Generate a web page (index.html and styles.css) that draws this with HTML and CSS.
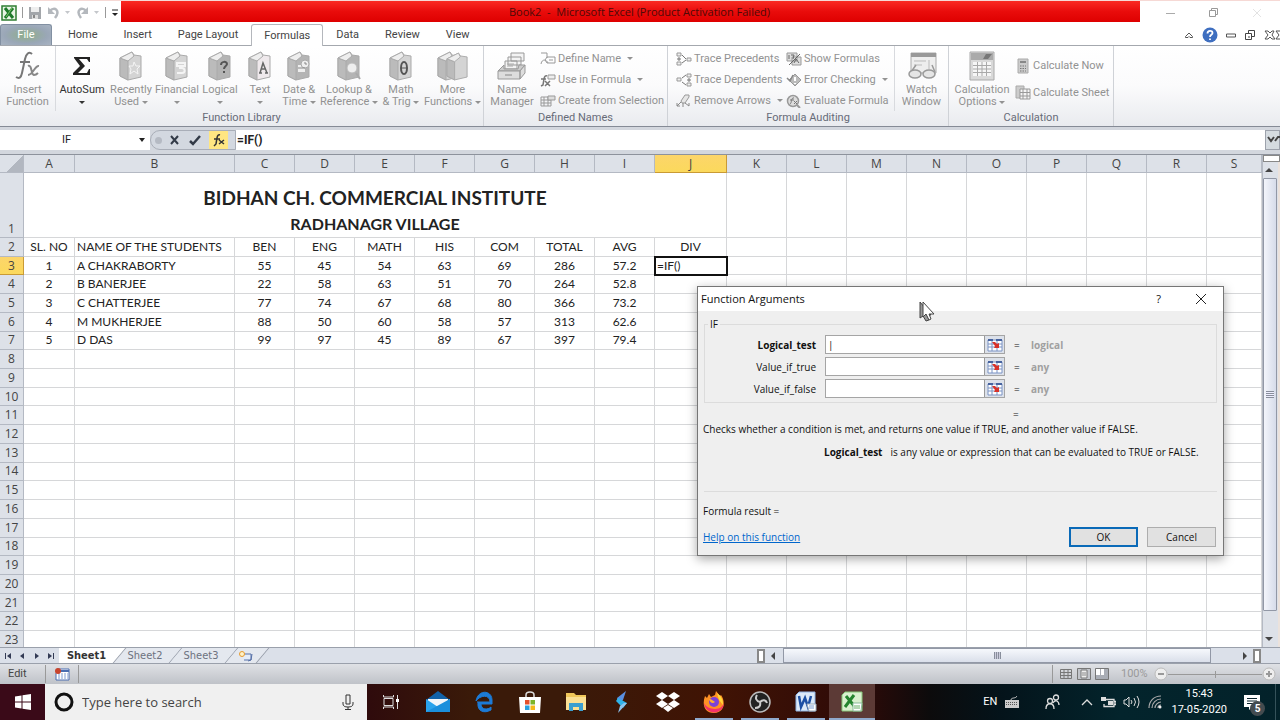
FILE: index.html
```
<!DOCTYPE html>
<html lang="en">
<head>
<meta charset="utf-8">
<title>Book2 - Microsoft Excel</title>
<link rel="stylesheet" href="styles.css">
</head>
<body>

<svg class="defs" aria-hidden="true">
<symbol id="book" viewBox="0 0 24 30">
<path d="M1 7 13 1 15 4 22 5V26L9 29 1 25Z" fill="currentColor" stroke="#aaa" />
<path d="M1 7 9 10V29L1 25Z" fill="#bbb" stroke="#aaa" />
<path d="M1 7 13 1 15 5 9 10Z" fill="#eee" stroke="#aaa" />
</symbol>
<symbol id="pick" viewBox="0 0 16 14">
<path d="M1 2h14v11H1z" fill="#fff" stroke="#7b93c4" />
<path d="M1 1h5v2H1zM9 1h6v2H9z" fill="#47639f" />
<path d="M1 6h14M1 9h14M5 3v10M10 3v10" stroke="#7b93c4" />
<path d="M5 4 8 4 10 6 12 5 12 10 7 10 8 8Z" fill="#d8322a" />
</symbol>
<symbol id="zoomout" viewBox="0 0 14 14"><circle cx="7" cy="7" r="6" fill="#eee" stroke="#bbb" /><path d="M4 7h6" stroke="#999" stroke-width="2" /></symbol>
<symbol id="zoomin" viewBox="0 0 14 14"><circle cx="7" cy="7" r="6" fill="#eee" stroke="#bbb" /><path d="M4 7h6M7 4v6" stroke="#999" stroke-width="2" /></symbol>
</svg>

<!-- title bar -->
<header class="titlebar">
<div class="quick">
<svg width="16" height="16" viewBox="0 0 16 16"><path d="M1 1h14v14H1z" fill="#e9f5e5" stroke="#2f7d32" stroke-width="1.5" /><path d="M4 3 12 13M12 3 4 13" stroke="#1f7a2a" stroke-width="3" /><path d="M11 3 5 12" stroke="#7cc56a" /></svg>
<i class="qsep"></i>
<button aria-label="Save"><svg width="14" height="14" viewBox="0 0 14 14"><path d="M1 1h12v12H1z" fill="#a3a6aa" /><path d="M3 1h8v5H3z" fill="#eee" /><path d="M4 9h6v4H4z" fill="#ddd" /><path d="M5 9h2v3H5z" fill="#888" /></svg></button>
<button aria-label="Undo"><svg width="24" height="14" viewBox="0 0 24 14"><path d="M3 5C7 0 14 4 8 12" fill="none" stroke="#b4b8bd" stroke-width="2.500" /><path d="M1 1v7h7z" fill="#b4b8bd" /><path d="M18 5h5l-2.500 3z" fill="#c4c7cb" /></svg></button>
<button aria-label="Redo"><svg width="24" height="14" viewBox="0 0 24 14"><path d="M10 5C6 0-1 4 5 12" fill="none" stroke="#b4b8bd" stroke-width="2.500" /><path d="M12 1v7H5z" fill="#b4b8bd" /><path d="M18 5h5l-2.500 3z" fill="#c4c7cb" /></svg></button>
<i class="qsep"></i>
<button aria-label="Customize"><svg width="8" height="8" viewBox="0 0 8 8"><path d="M1 1h6" stroke="#222" /><path d="M1 4h6L4 7z" fill="#222" /></svg></button>
</div>
<h1 class="caption">Book2&nbsp; -&nbsp; Microsoft Excel (Product Activation Failed)</h1>
<div class="winbtns">
<button aria-label="Minimize"><svg width="12" height="12"><path d="M1 6.500h9" stroke="#aaa" /></svg></button>
<button aria-label="Restore"><svg width="12" height="12"><path d="M1.500 3.500h6v6h-6zM3.500 3V1.500h6v6H8" fill="none" stroke="#999" /></svg></button>
<button aria-label="Close"><svg width="12" height="12"><path d="M2 2l8 8M10 2l-8 8" stroke="#e3e3e3" /></svg></button>
</div>
</header>

<!-- ribbon tabs -->
<nav class="tabs">
<button class="file">File</button>
<button>Home</button>
<button>Insert</button>
<button>Page Layout</button>
<button class="active">Formulas</button>
<button>Data</button>
<button>Review</button>
<button>View</button>
<div class="tabtools">
<svg width="10" height="8"><path d="M1.500 5.500 5 2l3.500 3.500v1H6L5 5.500l-1 1H1.500z" fill="none" stroke="#555" /></svg>
<svg width="16" height="16"><circle cx="8" cy="8" r="7.500" fill="#3f6fc0" /><path d="M5.500 6.500c0-3.500 5-3.500 5-.5 0 2-2.500 1.500-2.500 4M8 11.500v1.500" fill="none" stroke="#fff" stroke-width="1.800" /></svg>
<svg width="10" height="6"><path d="M.5 2h9v3h-9z" fill="none" stroke="#555" /></svg>
<svg width="12" height="12"><path d="M4.500 4V1.500h6v6H8M1.500 4.500h6v6h-6zM4 8h2" fill="none" stroke="#444" /></svg>
<svg width="16" height="10"><path d="M1 1h3l2 2 2-2h2L8 5l3 4H8L6 7 4 9H1l3-4zM16 1h-4l3 4-3 4h4" fill="none" stroke="#555" /></svg>
</div>
</nav>

<!-- ribbon -->
<section class="ribbon">
<div class="group">
<div class="items library">
<button class="big"><svg width="26" height="30" viewBox="0 0 26 30"><path d="M17 3c-3-3-6 0-7 5L7 22c-1 5-3 6-6 4M5 11h10" fill="none" stroke="#777" stroke-width="2" /><path d="M13 15c4-2 3 9 6 9 2 0 3-1 4-2M24 15c-4-1-6 9-11 9" fill="none" stroke="#888" stroke-width="2" /></svg><span>Insert<br>Function</span></button>
<button class="big on rule"><svg width="26" height="30" viewBox="0 0 26 30"><path d="M5 6h16v5h-1l-2-3h-8l6 7-7 7h9l2-4h1v6H4v-2l7-7-6-8z" fill="#222" /></svg><span>AutoSum<br><i class="dd"></i></span></button>
<button class="big"><svg width="24" height="30"><use href="#book" /><path d="m15 11 2 4h4l-3 3 1 5-4-3-4 3 1-5-2-3h4z" fill="none" stroke="#f4f4f4" /></svg><span>Recently<br>Used <i class="dd"></i></span></button>
<button class="big"><svg width="24" height="30"><use href="#book" /><path d="M12 12h8v3h-8zM12 22h5c4 0 3-5 0-5h-3" fill="none" stroke="#f4f4f4" stroke-width="2" /></svg><span>Financial<br><i class="dd"></i></span></button>
<button class="big dark"><svg width="24" height="30"><use href="#book" /><path d="M13 14c0-4 6-4 6-1 0 2-3 2-3 5M16 20v2" fill="none" stroke="#555" stroke-width="2" /></svg><span>Logical<br><i class="dd"></i></span></button>
<button class="big light"><svg width="24" height="30"><use href="#book" /><path d="m12 22 3-10 4 10M13 18h5M11 22h3M17 22h3" fill="none" stroke="#666" stroke-width="1.500" /></svg><span>Text<br><i class="dd"></i></span></button>
<button class="big dark"><svg width="24" height="30"><use href="#book" /><path d="M11 14h7v7h-7z" fill="#eee" /><circle cx="18" cy="13" r="4" fill="#eee" stroke="#aaa" /><path d="M11 17h7M18 11v2h2" stroke="#888" fill="none" /></svg><span>Date &amp;<br>Time <i class="dd"></i></span></button>
<button class="big dark"><svg width="24" height="30"><use href="#book" /><circle cx="15" cy="17" r="5" fill="#eee" stroke="#bbb" /><path d="m19 22 4 6" stroke="#aaa" stroke-width="2" /></svg><span>Lookup &amp;<br>Reference <i class="dd"></i></span></button>
<button class="big"><svg width="24" height="30"><use href="#book" /><ellipse cx="15" cy="17" rx="3" ry="6" fill="none" stroke="#555" stroke-width="2" /><path d="M13 17h4" stroke="#555" /></svg><span>Math<br>&amp; Trig <i class="dd"></i></span></button>
<button class="big"><svg width="32" height="30"><use href="#book" width="24" height="30" /><use href="#book" x="9" y="1" width="23" height="29" /></svg><span>More<br>Functions <i class="dd"></i></span></button>
</div>
<h2>Function Library</h2>
</div>

<div class="group">
<div class="items names">
<button class="big"><svg width="30" height="30" viewBox="0 0 30 30"><path d="M14 2h13v8H14zM11 6h13v8H11zM8 10h12v8H8z" fill="#f3f3f3" stroke="#999" /><path d="M10 13h7M10 15h6" stroke="#aaa" /><path d="M1 20 7 14V18h14l1-4h6l-5 6z" fill="#ccc" stroke="#999" /><path d="M1 20h22v8H1zM23 20l5-6v8l-5 6z" fill="#ddd" stroke="#999" /><path d="M8 24h7" stroke="#888" /></svg><span>Name<br>Manager</span></button>
<div class="stack">
<button><svg width="16" height="14"><path d="M1 1h6v5M1 12c1-6 6-4 7-1M7 5h8v6H7l-2-3zM9 8h4" fill="none" stroke="#999" /></svg>Define Name <i class="dd"></i></button>
<button><svg width="16" height="14"><path d="M7 3C4 2 4 6 3 12L1 13M1 6h5M5 8l5 5M10 8l-5 5" fill="none" stroke="#777" stroke-width="1.500" /><path d="M8 2h7v4H8z" fill="#eee" stroke="#999" /></svg>Use in Formula <i class="dd"></i></button>
<button><svg width="16" height="14"><path d="M1 3h10v9H1zM1 6h10M1 9h10M4 3v9M8 3v9" fill="none" stroke="#999" /><path d="M8 2h7v4H8z" fill="#ddd" stroke="#999" /></svg>Create from Selection</button>
</div>
</div>
<h2>Defined Names</h2>
</div>

<div class="group">
<div class="items audit">
<div class="stack">
<button><svg width="16" height="14"><path d="M1 1h4v3H1zM1 10h4v3H1zM11 6h4v3h-4z" fill="#eee" stroke="#999" /><path d="M6 3l4 4M6 11l4-3M1 7h4M3 5v4" fill="none" stroke="#777" /></svg>Trace Precedents</button>
<button><svg width="16" height="14"><path d="M1 5h4v3H1zM11 1h4v3h-4zM11 10h4v3h-4z" fill="#eee" stroke="#999" /><path d="M6 5l4-3M6 9l4 3M11 7h4M13 5v4" fill="none" stroke="#777" /></svg>Trace Dependents</button>
<button><svg width="16" height="14"><path d="M5 7 9 1h4v2L9 9H6z" fill="#e6e6e6" stroke="#999" /><path d="M5 8 1 12h3M1 12V9M7 9v4M9 9l4 3M13 12v-3" fill="none" stroke="#888" /></svg>Remove Arrows <i class="dd"></i></button>
</div>
<div class="stack">
<button><svg width="16" height="14"><path d="M1 1h10v8H1zM6 5h9v8H6z" fill="#ddd" stroke="#999" /><path d="M3 3v4M5 3h3l-1 4M14 2 3 13M8 11l2-4 3 4" fill="none" stroke="#666" /></svg>Show Formulas</button>
<button><svg width="16" height="14"><path d="m9 1 6 6-6 6-6-6z" fill="#bbb" stroke="#999" /><path d="M9 4v4M9 10v1" stroke="#fff" stroke-width="2" /><path d="m1 5 3 3 3-6" fill="none" stroke="#888" stroke-width="1.500" /></svg>Error Checking <i class="dd"></i></button>
<button><svg width="16" height="14"><circle cx="7" cy="7" r="5.500" fill="#ddd" stroke="#999" stroke-width="1.500" /><path d="M8 4C5 3 6 9 4 10M4 6h4M8 7l3 3M11 7l-3 3" fill="none" stroke="#777" /><path d="m11 11 3 3" stroke="#999" stroke-width="2" /></svg>Evaluate Formula</button>
</div>
<button class="big rule"><svg width="30" height="30" viewBox="0 0 30 30"><path d="M4 2h25v20H4z" fill="#eee" stroke="#aaa" /><path d="M4 2h25v4H4z" fill="#999" /><path d="M7 10h12M7 14h8M22 9v9" stroke="#bbb" /><path d="m4 21 5-7M28 21l-3-7" stroke="#999" stroke-width="1.500" /><ellipse cx="8" cy="23" rx="6" ry="4" fill="#e5e5e5" stroke="#999" stroke-width="1.500" /><ellipse cx="22" cy="23" rx="6" ry="4" fill="#e5e5e5" stroke="#999" stroke-width="1.500" /></svg><span>Watch<br>Window</span></button>
</div>
<h2>Formula Auditing</h2>
</div>

<div class="group">
<div class="items calc">
<button class="big"><svg width="26" height="30" viewBox="0 0 26 30"><path d="M1 1h24v28H1z" fill="#d9d9d9" stroke="#aaa" /><path d="M2 2h22v7H2z" fill="#aaa" /><path d="m14 8 3-5h6l-4 5z" fill="#777" /><path d="M4 11h18v14H4z" fill="#f6f6f6" /><path d="M4 14.500h18M4 18h18M4 21.500h18M8.500 11v14M13 11v14M17.500 11v14" stroke="#aaa" /></svg><span>Calculation<br>Options <i class="dd"></i></span></button>
<div class="stack loose">
<button><svg width="16" height="16"><path d="M3 1h10v14H3z" fill="#ccc" stroke="#aaa" /><path d="M5 3h6v2H5z" fill="#888" /><path d="M5 8h6M5 10.500h6M5 13h6" stroke="#777" stroke-dasharray="1.500 1" /></svg>Calculate Now</button>
<button><svg width="16" height="16"><path d="M1 1h8v12H1z" fill="#ccc" stroke="#aaa" /><path d="M5 4h10v10H5z" fill="#f5f5f5" stroke="#999" /><path d="M5 7.500h10M5 11h10M8 4v10M12 4v10" stroke="#999" /></svg>Calculate Sheet</button>
</div>
</div>
<h2>Calculation</h2>
</div>
</section>

<!-- formula bar -->
<section class="fbar">
<input class="namebox" aria-label="Name Box" value="IF">
<button class="namedd" aria-label="Names"><svg width="8" height="6"><path d="M1 1h6L4 5z" fill="#222" /></svg></button>
<div class="fbtns">
<i class="knob"></i>
<button aria-label="Cancel"><svg width="12" height="12"><path d="m2 2 7 8M9 2l-7 8" stroke="#333b48" stroke-width="2" /></svg></button>
<button aria-label="Enter"><svg width="14" height="12"><path d="m2 7 3 3 7-8" fill="none" stroke="#333b48" stroke-width="2.500" /></svg></button>
<button class="fx" aria-label="Insert Function"><svg width="14" height="14"><path d="M8 2C5 1 5 5 4 11L2 13M2 6h6M7 7l5 4M12 7l-5 4" fill="none" stroke="#333" stroke-width="1.500" /></svg></button>
</div>
<input class="formula" aria-label="Formula Bar" value="=IF()">
<button class="expand" aria-label="Expand"><svg width="14" height="8"><path d="m2 1 3 4 3-4M9 5l3-4h2" fill="none" stroke="#444" stroke-width="2" /></svg></button>
</section>

<!-- worksheet -->
<main class="work">
<div class="sheet">
<table id="grid">
<colgroup>
<col class="rowno"><col class="a"><col class="b"><col><col><col><col><col><col><col><col class="j"><col><col><col><col><col><col><col><col><col class="rest">
</colgroup>
<thead>
<tr><th class="corner"></th><th>A</th><th>B</th><th>C</th><th>D</th><th>E</th><th>F</th><th>G</th><th>H</th><th>I</th><th class="sel">J</th><th>K</th><th>L</th><th>M</th><th>N</th><th>O</th><th>P</th><th>Q</th><th>R</th><th>S</th></tr>
</thead>
<tbody>
<tr class="heading"><th>1</th><td colspan="10"><b>BIDHAN CH. COMMERCIAL INSTITUTE</b><br><strong>RADHANAGR VILLAGE</strong></td></tr>
<tr><th>2</th><td>SL. NO</td><td>NAME OF THE STUDENTS</td><td>BEN</td><td>ENG</td><td>MATH</td><td>HIS</td><td>COM</td><td>TOTAL</td><td>AVG</td><td>DIV</td></tr>
<tr><th class="sel">3</th><td>1</td><td>A CHAKRABORTY</td><td>55</td><td>45</td><td>54</td><td>63</td><td>69</td><td>286</td><td>57.2</td><td class="cur">=IF()</td></tr>
<tr><th>4</th><td>2</td><td>B BANERJEE</td><td>22</td><td>58</td><td>63</td><td>51</td><td>70</td><td>264</td><td>52.8</td><td></td></tr>
<tr><th>5</th><td>3</td><td>C CHATTERJEE</td><td>77</td><td>74</td><td>67</td><td>68</td><td>80</td><td>366</td><td>73.2</td><td></td></tr>
<tr><th>6</th><td>4</td><td>M MUKHERJEE</td><td>88</td><td>50</td><td>60</td><td>58</td><td>57</td><td>313</td><td>62.6</td><td></td></tr>
<tr><th>7</th><td>5</td><td>D DAS</td><td>99</td><td>97</td><td>45</td><td>89</td><td>67</td><td>397</td><td>79.4</td><td></td></tr>
</tbody>
</table>
</div>
<div class="vscroll">
<i class="vsplit"></i>
<button aria-label="Up"><svg width="10" height="6"><path d="M1 5h8L5 1z" fill="#444" /></svg></button>
<div class="vthumb"><i></i></div>
<button aria-label="Down"><svg width="10" height="6"><path d="M1 1h8L5 5z" fill="#444" /></svg></button>
</div>
</main>

<!-- sheet tabs -->
<footer class="sheetbar">
<div class="nav">
<button aria-label="First"><svg width="8" height="8"><path d="M1.500 1v6" stroke="#333b55" /><path d="M7 1v6L3 4z" fill="#333b55" /></svg></button>
<button aria-label="Previous"><svg width="8" height="8"><path d="M6 1v6L2 4z" fill="#333b55" /></svg></button>
<button aria-label="Next"><svg width="8" height="8"><path d="M2 1v6l4-3z" fill="#333b55" /></svg></button>
<button aria-label="Last"><svg width="8" height="8"><path d="M1 1v6l4-3z" fill="#333b55" /><path d="M6.500 1v6" stroke="#333b55" /></svg></button>
</div>
<button class="tab current"><span>Sheet1</span></button>
<button class="tab"><span>Sheet2</span></button>
<button class="tab"><span>Sheet3</span></button>
<button class="tab new" aria-label="Insert Worksheet"><svg width="16" height="12"><path d="M4 4h9v6H6" fill="#e4ecf8" stroke="#5670a8" /><path d="M10 11l3-1 1-6" fill="none" stroke="#5670a8" /><circle cx="4" cy="4" r="2.500" fill="#fff3c9" stroke="#e69a2e" /></svg></button>
<div class="hscroll">
<i class="hsplit"></i>
<button aria-label="Left"><svg width="6" height="10"><path d="M5 1v8L1 5z" fill="#444" /></svg></button>
<div class="hthumb"><i></i></div>
<button class="right" aria-label="Right"><svg width="6" height="10"><path d="M1 1v8l4-4z" fill="#444" /></svg></button>
<i class="hsplit"></i>
</div>
</footer>

<!-- status bar -->
<section class="status">
<span class="mode">Edit</span>
<button class="macro" aria-label="Record Macro"><svg width="16" height="14"><path d="M3 2h12v11H2V6" fill="#fff" stroke="#4a6db0" /><path d="M5 3h10v2H5z" fill="#4a6db0" /><path d="M4 7h10M4 9h10M4 11h10" stroke="#7f9bd0" stroke-dasharray="2 1" /><circle cx="4" cy="4" r="3" fill="#c8442d" /></svg></button>
<div class="views">
<button aria-label="Normal"><svg width="14" height="12"><path d="M1.500 1.500h11v9h-11zM1 4.500h12M1 7.500h12M5 1v10M9 1v10" fill="none" stroke="#777" /></svg></button>
<button aria-label="Page Layout"><svg width="14" height="12"><path d="M.5.500h13v11H.5z" fill="#c2c5cb" stroke="#777" /><path d="M4 2h6v8H4z" fill="#eee" stroke="#777" /><path d="M5 5h4M5 7h4" stroke="#888" /></svg></button>
<button aria-label="Page Break"><svg width="14" height="12"><path d="M.5.500h13v11H.5z" fill="#a9adb5" stroke="#777" /><path d="M1 1h4v6H1zM6 1h3v6H6z" fill="#fff" /></svg></button>
</div>
<span class="pct">100%</span>
<button aria-label="Zoom out"><svg width="14" height="14"><use href="#zoomout" /></svg></button>
<input class="zoom" type="range" min="0" max="100" value="50" aria-label="Zoom">
<button aria-label="Zoom in"><svg width="14" height="14"><use href="#zoomin" /></svg></button>
</section>

<!-- taskbar -->
<section class="taskbar">
<button class="start" aria-label="Start"><svg width="16" height="16"><path d="M0 2.500 6.500 1.500V7.500H0zM7.500 1.300 16 0v7.500H7.500zM0 8.500h6.500v6L0 13.500zM7.500 8.500H16V16l-8.500-1.300z" fill="#fff" /></svg></button>
<label class="search">
<svg width="20" height="20"><circle cx="10" cy="10" r="8" fill="none" stroke="#111" stroke-width="3" /></svg>
<input type="text" placeholder="Type here to search">
<svg width="12" height="16"><path d="M4 1h4v9H4z" fill="none" stroke="#333" /><path d="M1 8v2q0 3 5 3t5-3V8M6 13v3M3 15.500h6" fill="none" stroke="#333" /></svg>
</label>
<button class="app view" aria-label="Task View"><svg width="18" height="16"><path d="M2 4.500h9v7H2zM1.500 1v2h10V1M1.500 15v-2h10v2M15.500 1v14" fill="none" stroke="#ddd" /><path d="M14 5h3v3h-3z" fill="#fff" /></svg></button>
<button class="app" aria-label="Mail"><svg width="24" height="22"><path d="M0 9 12 0l12 9v12H0z" fill="#1262a8" /><path d="M2 8h20v8H2z" fill="#f2f6fa" /><path d="M0 8l12 8 12-8v13H0z" fill="#2aa3ec" /><path d="m0 21 24-13v13z" fill="#1b8fdc" /></svg></button>
<button class="app" aria-label="Edge"><svg width="20" height="22"><path d="M3 11h13c0-8-10-7-14-1C4-2 18-1 18 9v4H7c0 6 7 6 10 3v3C10 23 3 20 4 12" fill="#1c7bd6" stroke="#1c7bd6" /><path d="M7 9h6c0-4-5-4-6 0z" fill="#35180a" /></svg></button>
<button class="app" aria-label="Store"><svg width="22" height="22"><path d="M7 6V4q0-3 4-3t4 3v2" fill="none" stroke="#ddd" stroke-width="1.500" /><path d="M0 6h22l-1 16H1z" fill="#fff" /><path d="M6 9h4.500v4.500H6z" fill="#e5502c" /><path d="M11.500 9H16v4.500h-4.500z" fill="#7db52a" /><path d="M6 14.500h4.500V19H6z" fill="#2aa0e0" /><path d="M11.500 14.500H16V19h-4.500z" fill="#f5b919" /></svg></button>
<button class="app" aria-label="File Explorer"><svg width="22" height="20"><path d="M1 1h8l2 2h10v15H1z" fill="#f0c75a" /><path d="M1 5h20v13H1z" fill="#fbe094" /><path d="M4 11h14v8h-4v-4H8v4H4z" fill="#3b9fd0" /></svg></button>
<button class="app" aria-label="Spark"><svg width="16" height="22"><path d="M12 0 3 7l2 5 4-3z" fill="#5a8fe0" /><path d="M4 7 13 12 9 17 2 10z" fill="#2fb3ea" /><path d="M13 12 4 22l2-7 4-3z" fill="#8cc4f0" /></svg></button>
<button class="app" aria-label="Dropbox"><svg width="24" height="20"><path d="m6 0 6 4-6 4-6-4zM18 0l6 4-6 4-6-4zM6 8l6 4-6 4-6-4zM18 8l6 4-6 4-6-4zM12 13l5 3-5 4-5-4z" fill="#fff" /></svg></button>
<button class="app open" aria-label="Firefox"><svg width="22" height="22"><path d="M2 5l2 2 2-4 2 3 4-2 1-4 4 5 1-1c4 5 5 17-7 18C1 22-1 13 2 5z" fill="#ff9125" /><path d="M1 12c1 12 19 13 20 0-1 3-4 6-9 6S2 15 1 12z" fill="#f4316a" /><path d="M14 2c4 3 6 6 6 12l-4-5z" fill="#ffd83a" /><circle cx="11" cy="11" r="5" fill="#7b42d8" /><path d="M6 8c3 0 4 2 6 3-2 2-5 1-6-3z" fill="#ffb02c" /></svg></button>
<button class="app open" aria-label="OBS"><svg width="22" height="22"><circle cx="11" cy="11" r="10" fill="#222" stroke="#bbb" stroke-width="1.500" /><path d="M11 11c-4-1-5-4-3-7M11 11c3-3 6-2 7 1M11 11c1 4-1 6-5 6" fill="none" stroke="#ccc" stroke-width="2" /></svg></button>
<button class="app open" aria-label="Word"><svg width="22" height="22"><path d="M4 1h16v19H1V4z" fill="#dce9f8" stroke="#8fb4e4" /><path d="m4 5 2 11 4-9 3 9 3-11" fill="none" stroke="#1c4fa4" stroke-width="2.500" /><path d="M12 13h9v7h-7z" fill="#fff" stroke="#9ab" /><path d="M14 15h5M14 17h5" stroke="#7a9cd0" /></svg></button>
<button class="app open focus" aria-label="Excel"><svg width="22" height="22"><path d="M4 1h17v19H1V4z" fill="#d9f0cf" stroke="#86c77a" /><path d="m5 5 9 11M13 4 4 16" stroke="#25842f" stroke-width="3" /><path d="M12 12h9l-1 8h-8z" fill="#fff" stroke="#8b9" /><path d="M13 15h6M13 17h6" stroke="#6ab06a" /></svg></button>
<div class="tray">
<span class="lang">EN</span>
<svg class="keys" width="16" height="14"><path d="M1 5h14v8H1z" fill="#ccc" /><path d="M2 7.500h12M2 9.500h12" stroke="#555" stroke-dasharray="1 1" /><path d="M7 5c0-3 5-1 6-4" fill="none" stroke="#ccc" /></svg>
<svg class="people" width="16" height="16"><circle cx="5" cy="7" r="2.500" fill="none" stroke="#ddd" stroke-width="1.300" /><circle cx="11" cy="3.500" r="2.500" fill="none" stroke="#ddd" stroke-width="1.300" /><path d="M1 15c0-7 8-7 8 0M8 9c2-4 6-2 6 2" fill="none" stroke="#ddd" stroke-width="1.300" /></svg>
<svg width="12" height="8"><path d="m1 7 5-5 5 5" fill="none" stroke="#ddd" stroke-width="1.300" /></svg>
<svg width="16" height="12"><path d="M5 3.500h9v7H4V8M14 5.500h2v3h-2" fill="none" stroke="#ddd" stroke-width="1.300" /><path d="M8 5h5v4H8zM1 1h5v4H1z" fill="#ddd" /></svg>
<svg width="18" height="14"><path d="M1 5h2l3-3v10L3 9H1z" fill="none" stroke="#ddd" /><path d="M8 5q2 2 0 4M11 3q3 4 0 8M14 1q4 6 0 12" fill="none" stroke="#ddd" /></svg>
<svg width="14" height="14"><path d="M1 13C1 6 6 1 13 1M4 13c0-5 4-9 9-9M7 13c0-3 3-6 6-6M10 13q0-3 3-3" fill="none" stroke="#aaa" stroke-width="1.200" /><circle cx="12" cy="12" r="1.500" fill="#eee" /></svg>
<time class="clock">15:43<br>17-05-2020</time>
<button class="notes" aria-label="Notifications"><svg width="16" height="16"><path d="M0 1h16v12H8l-3 3v-3H0z" fill="#fff" /><path d="M3 4.500h10M3 7h10M3 9.500h10" stroke="#08222b" /></svg><b>5</b></button>
</div>
</section>

<!-- function arguments window -->
<form class="dialog" role="dialog" aria-labelledby="dlgtitle">
<div class="dlgbar">
<span id="dlgtitle">Function Arguments</span>
<button type="button" aria-label="Help">?</button>
<button type="button" aria-label="Close"><svg width="12" height="12"><path d="m1 1 10 10M11 1 1 11" stroke="#222" /></svg></button>
</div>
<fieldset>
<legend>IF</legend>
<div class="arg"><label for="a1"><b>Logical_test</b></label><span class="edit"><input id="a1" type="text" value="|"><button type="button" aria-label="Collapse"><svg width="16" height="14"><use href="#pick" /></svg></button></span><span>=</span><b class="kind">logical</b></div>
<div class="arg"><label for="a2">Value_if_true</label><span class="edit"><input id="a2" type="text"><button type="button" aria-label="Collapse"><svg width="16" height="14"><use href="#pick" /></svg></button></span><span>=</span><b class="kind">any</b></div>
<div class="arg"><label for="a3">Value_if_false</label><span class="edit"><input id="a3" type="text"><button type="button" aria-label="Collapse"><svg width="16" height="14"><use href="#pick" /></svg></button></span><span>=</span><b class="kind">any</b></div>
</fieldset>
<p class="total">=</p>
<p class="desc">Checks whether a condition is met, and returns one value if TRUE, and another value if FALSE.</p>
<p class="argdesc"><b>Logical_test</b><span>is any value or expression that can be evaluated to TRUE or FALSE.</span></p>
<p class="result">Formula result =</p>
<div class="actions">
<a href="#help">Help on this function</a>
<button type="submit" class="ok">OK</button>
<button type="button">Cancel</button>
</div>
</form>

<svg class="pointer" width="16" height="22" viewBox="0 0 16 22"><path d="M1 1v16l3-2 3 5 3-1-2-5h4z" fill="#999" stroke="#444" /><path d="M4 1v15l3-3 3 6 2-1-2-5h5z" fill="#fff" stroke="#444" /></svg>

<script src="script.js"></script>
</body>
</html>
```
FILE: styles.css
```
* {
	box-sizing: border-box;
}
body {
	margin: 0;
	height: 100vh;
	display: flex;
	flex-direction: column;
	overflow: hidden;
	background: #fff;
	color: #222;
	font-family: Roboto, "Open Sans", sans-serif;
	font-size: 11px;
	line-height: 12px;
}
button, input {
	font: inherit;
	color: inherit;
	border: 0;
	padding: 0;
	margin: 0;
	background: none;
}
h1, h2, p {
	margin: 0;
	font-size: 11px;
	font-weight: normal;
}
svg {
	display: block;
	flex: none;
}
.defs {
	position: absolute;
	width: 0;
	height: 0;
}

/* title bar */
.titlebar {
	flex: none;
	height: 24px;
	display: flex;
	align-items: center;
	border-top: 1px solid #f6d9d5;
}
.quick {
	width: 121px;
	flex: none;
	display: flex;
	align-items: center;
	gap: 5px;
	padding-left: 1px;
}
.qsep {
	width: 1px;
	height: 11px;
	background: #999;
}
.caption {
	flex: 1;
	align-self: stretch;
	margin-bottom: 2px;
	padding-left: 18px;
	line-height: 22px;
	text-align: center;
	font-family: "Open Sans", sans-serif;
	color: #4d0a08;
	background: linear-gradient(#fa2a22, #e90c0b 50%, #de0000);
}
.winbtns {
	width: 140px;
	display: flex;
	gap: 31px;
	padding-left: 25px;
}

/* ribbon tabs */
.tabs {
	flex: none;
	height: 22px;
	display: flex;
	border-bottom: 1px solid #a4a8ae;
}
.tabs > button {
	padding: 0 13px;
	color: #444;
}
.tabs > .file {
	width: 52px;
	margin-right: 3px;
	border: 1px solid #8290a2;
	border-bottom: 0;
	border-radius: 3px 3px 0 0;
	color: #fff;
	background: radial-gradient(#8fae88, #9aa7b7 60%, #a8b3c2);
}
.tabs > .active {
	height: 22px;
	border: 1px solid #b4b7bc;
	border-bottom: 0;
	border-radius: 3px 3px 0 0;
	padding: 0 12px;
	background: #fff;
}
.tabtools {
	margin-left: auto;
	display: flex;
	align-items: center;
	gap: 8px;
}

/* ribbon */
.ribbon {
	flex: none;
	height: 81px;
	display: flex;
	color: #929292;
	background: linear-gradient(#fff, #fbfbfc 50%, #e9ebef);
	border-bottom: 1px solid #858b96;
}
.group {
	display: flex;
	flex-direction: column;
	border-right: 1px solid #cfd2d7;
}
.group h2 {
	text-align: center;
	line-height: 14px;
	color: #666b78;
}
.items {
	height: 65px;
	display: grid;
}
.library {
	grid-template-columns: 55px 53px 46px 46px 40px 40px 38px 62px 42px 61px;
}
.names {
	grid-template-columns: 56px 127px;
}
.audit {
	grid-template-columns: 110px 108px 54px;
	padding-left: 8px;
}
.calc {
	grid-template-columns: 66px 98px;
}
.big {
	display: flex;
	flex-direction: column;
	align-items: center;
	padding-top: 5px;
	gap: 3px;
	white-space: nowrap;
	color: inherit;
}
.big svg {
	color: #d4d4d4;
}
.big.dark svg {
	color: #b4b4b4;
}
.big.light svg {
	color: #efe9ec;
}
.big.on {
	color: #333;
}
.rule {
	border-left: 1px solid #d8dade;
}
.dd {
	display: inline-block;
	vertical-align: middle;
	border: 3px solid transparent;
	border-top-color: currentColor;
	border-bottom-width: 0;
}
.stack {
	display: flex;
	flex-direction: column;
	padding-top: 2px;
}
.stack button {
	height: 21px;
	display: flex;
	align-items: center;
	gap: 2px;
	white-space: nowrap;
}
.stack button .dd {
	margin-left: 4px;
}
.loose {
	padding-top: 6px;
}
.loose button {
	height: 27px;
}

/* formula bar */
.fbar {
	flex: none;
	height: 27px;
	display: flex;
	padding: 3px 0 4px;
	background: #d3d7de;
	color: #222;
}
.namebox {
	width: 133px;
	text-align: center;
	background: #fff;
}
.namedd {
	width: 17px;
	display: flex;
	align-items: center;
	justify-content: center;
	background: #fff;
}
.fbtns {
	width: 86px;
	display: flex;
	align-items: center;
	justify-content: space-between;
	padding: 0 7px 0 4px;
	border: 1px solid #a9aeb8;
	border-radius: 10px 0 0 10px;
	background: #d3d8e0;
}
.knob {
	width: 7px;
	height: 7px;
	border-radius: 50%;
	background: #b5bac3;
}
.fx {
	width: 19px;
	height: 18px;
	display: flex;
	align-items: center;
	justify-content: center;
	background: #ffe682;
}
.formula {
	flex: 1;
	min-width: 0;
	padding-left: 1px;
	font-size: 12px;
	font-weight: bold;
	background: #fff;
}
.expand {
	width: 15px;
	border: 1px solid #9da2ac;
	background: #d5dbe0;
}

/* worksheet */
.work {
	flex: 1;
	min-height: 0;
	display: flex;
	border-top: 1px solid #8d929c;
}
.sheet {
	flex: 1;
	min-width: 0;
	overflow: hidden;
}
#grid {
	width: 100%;
	height: calc(100% + 3px);
	table-layout: fixed;
	border-spacing: 0;
	font-family: Lato, "Open Sans", sans-serif;
	font-size: 12px;
	line-height: 16px;
}
#grid col {
	width: 60px;
}
#grid .rowno {
	width: 24px;
}
#grid .a {
	width: 51px;
}
#grid .b {
	width: 160px;
}
#grid .j {
	width: 72px;
}
#grid .rest {
	width: auto;
}
#grid th, #grid td {
	padding: 0 2px;
	border-right: 1px solid #d6d7d9;
	border-bottom: 1px solid #d6d7d9;
	text-align: center;
	white-space: nowrap;
}
#grid th {
	padding: 0;
	font-family: "Open Sans", sans-serif;
	font-weight: normal;
	color: #444;
	background: #dde1e8;
	border-color: #b4b9c3;
}
#grid thead th {
	height: 18px;
}
#grid .corner {
	background: linear-gradient(135deg, #dde1e8 60%, #b2b7c0 60%);
}
#grid .sel {
	background: linear-gradient(#fcd56a, #fbd95c);
	border-color: #c99a35;
}
#grid td:nth-child(3) {
	text-align: left;
}
#grid .heading {
	height: 65px;
}
#grid .heading th {
	vertical-align: bottom;
}
#grid .heading td {
	vertical-align: bottom;
	line-height: 22px;
}
#grid .heading b {
	font-size: 19px;
	line-height: 30px;
}
#grid .heading strong {
	font-size: 16px;
}
#grid .cur {
	text-align: left;
	outline: 2px solid #111;
	outline-offset: -1px;
}
.vscroll {
	width: 18px;
	flex: none;
	display: flex;
	flex-direction: column;
	align-items: center;
	background: linear-gradient(90deg, #dde1e8 15px, #ebe2dc 15px);
	border-left: 1px solid #b4b9c3;
}
.vsplit {
	width: 100%;
	height: 7px;
	border: 1px solid #888;
	background: #fff;
}
.vscroll button {
	height: 16px;
	margin-right: 5px;
}
.vthumb {
	flex: 1;
	width: 14px;
	align-self: flex-start;
	margin-bottom: 20px;
	display: flex;
	align-items: center;
	justify-content: center;
	border: 1px solid #9298a6;
	border-radius: 1px;
	background: linear-gradient(90deg, #f3f5fb, #d6dcea);
}
.vthumb i {
	width: 8px;
	height: 7px;
	background: repeating-linear-gradient(#888e9b 0 1px, #eef 1px 2px);
}

/* sheet tabs */
.sheetbar {
	flex: none;
	height: 17px;
	display: flex;
	background: #dbe0e9;
	border-top: 1px solid #9aa0ab;
	border-bottom: 1px solid #9aa0ab;
}
.nav {
	width: 59px;
	display: flex;
	align-items: center;
	justify-content: space-between;
	padding: 0 4px;
}
.tab {
	position: relative;
	width: 56px;
	padding-right: 6px;
	font-family: "DejaVu Sans Condensed", "DejaVu Sans", sans-serif;
	color: #6d7280;
}
.tab::before {
	content: "";
	position: absolute;
	inset: 0;
	background: #e4e8ef;
	border-right: 1px solid #8f96a3;
	transform: skewX(-40deg);
}
.tab span, .tab svg {
	position: relative;
}
.tab.current {
	z-index: 1;
	width: 61px;
	font-weight: bold;
	color: #333;
	background: linear-gradient(90deg, #fff 30px, transparent 30px);
}
.tab.current::before {
	left: 10px;
	background: #fff;
}
.tab.new {
	width: 31px;
	padding: 0 0 0 6px;
}
.hscroll {
	width: 505px;
	margin-left: auto;
	padding-right: 1px;
	display: flex;
	align-items: center;
	margin-right: 18px;
}
.hsplit {
	width: 8px;
	height: 14px;
	border: 2px solid #888;
	background: #fff;
}
.hscroll button {
	padding: 0 5px;
}
.hthumb {
	flex: 1;
	height: 15px;
	margin-left: 2px;
	display: flex;
	align-items: center;
	justify-content: center;
	border: 1px solid #9298a6;
	background: linear-gradient(#f6f8fc, #dadfea);
}
.hthumb i {
	width: 7px;
	height: 7px;
	background: repeating-linear-gradient(90deg, #888e9b 0 1px, #ccd 1px 2px);
}
.hscroll .right {
	padding: 0 5px 0 31px;
}

/* status bar */
.status {
	flex: none;
	height: 20px;
	display: flex;
	align-items: center;
	padding-right: 4px;
	color: #444;
	background: linear-gradient(#dfe1e5, #bfc2c8);
}
.mode {
	width: 46px;
	padding-left: 8px;
	line-height: 18px;
	border-right: 1px solid #999;
}
.macro {
	width: 33px;
	height: 18px;
	padding-left: 8px;
	border-right: 1px solid #999;
}
.views {
	margin-left: auto;
	height: 18px;
	display: flex;
	align-items: center;
	gap: 4px;
	padding: 0 12px 0 6px;
	border-left: 1px solid #999;
}
.pct {
	width: 33px;
	color: #999;
}
.zoom {
	width: 94px;
	height: 14px;
	appearance: none;
	background: linear-gradient(#999, #999) center / 100% 1px no-repeat;
}
.zoom::-webkit-slider-thumb {
	appearance: none;
	width: 1px;
	height: 7px;
	background: #999;
}

/* taskbar */
.taskbar {
	flex: none;
	height: 36px;
	display: flex;
	color: #fff;
	background: linear-gradient(90deg, #3a0a18 45px, #2f0b0c 370px, #3a1a09 470px, #3a1a09 560px, #401304 720px, #2e0a08 860px, #0c0b0c 930px, #04131a 1000px, #03242c 1120px, #03222a);
}
.start {
	width: 45px;
	display: flex;
	align-items: center;
	justify-content: center;
}
.search {
	width: 322px;
	display: flex;
	align-items: center;
	gap: 8px;
	padding: 0 13px 0 9px;
	background: #f0f0f0;
	color: #444;
}
.search input {
	flex: 1;
	min-width: 0;
	font-family: "Open Sans", sans-serif;
	font-size: 13px;
}
.search input::placeholder {
	color: #444;
}
.app {
	width: 46px;
	display: flex;
	align-items: center;
	justify-content: center;
}
.app.view {
	width: 48px;
}
.app.open {
	background: linear-gradient(#8fa9cc, #8fa9cc) bottom / 38px 2px no-repeat;
}
.app.focus {
	background-color: #5c3a36;
	background-size: 100% 2px;
}
.tray {
	margin-left: auto;
	display: flex;
	align-items: center;
	gap: 7px;
}
.keys {
	margin-right: 5px;
}
.people {
	margin: 0 13px;
}
.clock {
	margin-left: 2px;
	line-height: 16px;
	text-align: center;
}
.notes {
	position: relative;
	width: 42px;
	height: 36px;
	padding-left: 10px;
	color: #fff;
	border-right: 1px solid #35525a;
	margin-right: 4px;
}
.notes b {
	position: absolute;
	left: 16px;
	top: 17px;
	width: 15px;
	height: 15px;
	border-radius: 50%;
	background: #444c50;
	font-size: 10px;
	line-height: 15px;
}

/* function arguments window */
.dialog {
	position: absolute;
	left: 697px;
	top: 286px;
	width: 527px;
	height: 270px;
	display: flex;
	flex-direction: column;
	border: 1px solid #767676;
	background: #efefef;
	box-shadow: 0 3px 10px rgba(0, 0, 0, .35);
	color: #111;
	font-family: "Open Sans", "Noto Sans", sans-serif;
	font-size: 10px;
}
.dialog p {
	font-size: 10px;
}
.dlgbar {
	height: 24px;
	display: flex;
	align-items: center;
	padding: 0 16px 0 3px;
	background: #fff;
	font-size: 11px;
}
.dlgbar span {
	flex: 1;
}
.dlgbar button {
	margin-left: 34px;
}
.dialog fieldset {
	margin: 7px 6px 0;
	padding: 5px 0 4px;
	border: 1px solid #dcdcdc;
	display: flex;
	flex-direction: column;
	gap: 3px;
}
.dialog legend {
	margin-left: 3px;
	padding: 0 2px;
}
.arg {
	display: grid;
	grid-template-columns: 111px 180px 8px auto;
	align-items: center;
	column-gap: 9px;
}
.arg label {
	text-align: right;
}
.edit {
	height: 19px;
	display: flex;
	border: 1px solid #a5a5a5;
	background: #fff;
}
.edit input {
	flex: 1;
	min-width: 0;
	padding-left: 2px;
}
.edit button {
	width: 20px;
	display: flex;
	align-items: center;
	justify-content: center;
	border-left: 1px solid #999;
	background: #dce1ea;
}
.kind {
	color: #a0a0a0;
}
.total {
	margin: 5px 0 3px 315px;
}
.desc {
	padding-left: 5px;
}
.argdesc {
	display: flex;
	gap: 8px;
	margin: 11px 6px 0;
	padding-left: 120px;
	height: 46px;
	border-bottom: 1px solid #dcdcdc;
}
.result {
	margin: 13px 0 0 5px;
}
.actions {
	display: flex;
	gap: 9px;
	margin: 10px 7px 0 5px;
	align-items: center;
}
.actions a {
	margin-right: auto;
	color: #0066cc;
}
.actions button {
	width: 69px;
	height: 20px;
	border: 1px solid #adadad;
	background: #e1e1e1;
}
.actions .ok {
	border: 2px solid #0a6ab8;
}
.pointer {
	position: absolute;
	left: 919px;
	top: 301px;
}
```
FILE: script.js
```
var body = document.querySelector("#grid tbody");

// blank rows under the data
for (var n = 8; n <= 23; n++) {
	var row = body.insertRow();
	var th = document.createElement("th");
	th.textContent = n;
	row.appendChild(th);
}

// pad every row out to column S
for (var i = 0; i < body.rows.length; i++) {
	var r = body.rows[i];
	var used = 0;
	for (var c = 0; c < r.cells.length; c++) used += r.cells[c].colSpan;
	for (; used < 20; used++) r.insertCell();
}
```
